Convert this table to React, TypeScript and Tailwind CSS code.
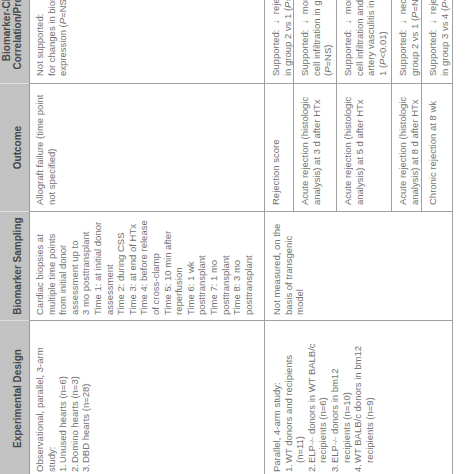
const L = ({ children }: { children: React.ReactNode }) => (
  <div className="whitespace-nowrap">{children}</div>
);

const Item = ({ n, lines }: { n: string; lines: React.ReactNode[] }) => (
  <div className="flex">
    <span className="w-[9px] shrink-0">{n}</span>
    <div>
      {lines.map((l, i) => (
        <L key={i}>{l}</L>
      ))}
    </div>
  </div>
);

const Sup = () => <sup className="text-[6px] relative -top-[1px]">–/–</sup>;

const subRows = [
  {
    h: "h-[29px]",
    outcome: ["Rejection score"],
    corr: [
      <>Supported:&nbsp; ↓&nbsp; rejection score</>,
      <>in group 2 vs 1 (<i>P</i>=NS)</>,
    ],
  },
  {
    h: "h-[43px]",
    outcome: ["Acute rejection (histologic", "analysis) at 3 d after HTx"],
    corr: [
      <>Supported:&nbsp; ↓&nbsp; mononuclear</>,
      <>cell infiltration in group 2 vs 1</>,
      <>(<i>P</i>=NS)</>,
    ],
  },
  {
    h: "h-[55px]",
    outcome: ["Acute rejection (histologic", "analysis) at 5 d after HTx"],
    corr: [
      <>Supported:&nbsp; ↓&nbsp; mononuclear</>,
      <>cell infiltration and coronary</>,
      <>artery vasculitis in group 2 vs</>,
      <>1 (<i>P</i>&lt;0.01)</>,
    ],
  },
  {
    h: "h-[30px]",
    outcome: ["Acute rejection (histologic", "analysis) at 8 d after HTx"],
    corr: [
      <>Supported:&nbsp; ↓&nbsp; necrosis in</>,
      <>group 2 vs 1 (<i>P</i>=NS)</>,
    ],
  },
  {
    h: "flex-1",
    outcome: ["Chronic rejection at 8 wk"],
    corr: [
      <>Supported:&nbsp; ↓&nbsp; rejection</>,
      <>in group 3 vs 4 (<i>P</i>&lt;0.05)</>,
    ],
  },
];

const sampling = [
  "Cardiac biopsies at",
  "multiple time points",
  "from initial donor",
  "assessment up to",
  "3 mo posttransplant",
  "Time 1: at initial donor",
  "assessment",
  "Time 2: during CSS",
  "Time 3: at end of HTx",
  "Time 4: before release",
  "of cross-clamp",
  "Time 5: 10 min after",
  "reperfusion",
  "Time 6: 1 wk",
  "posttransplant",
  "Time 7: 1 mo",
  "posttransplant",
  "Time 8: 3 mo",
  "posttransplant",
];

export default function App() {
  return (
    <div className="w-[474px] h-[474px] overflow-hidden bg-white font-['Liberation_Sans',Arial,sans-serif]">
      <div className="w-[474px] h-[474px] -rotate-90 overflow-hidden">
        <div className="ml-[-2px] w-[560px] text-[9.5px] leading-[11.6px] text-[#727272]">
          {/* header */}
          <div className="flex h-[30px] bg-[#c2c2c2] border-b border-[#999] text-[10px] leading-[11px] font-bold text-[#474747]">
            <div className="w-[156px] shrink-0 flex items-end justify-center pb-[6px] border-r border-[#dcdcdc]">
              Experimental Design
            </div>
            <div className="w-[109px] shrink-0 flex items-end justify-center pb-[6px] border-r border-[#dcdcdc]">
              Biomarker Sampling
            </div>
            <div className="w-[128px] shrink-0 flex items-end justify-center pb-[6px] border-r border-[#dcdcdc]">
              Outcome
            </div>
            <div className="w-[132px] shrink-0 flex flex-col items-center justify-end pb-[6px]">
              <L>Biomarker-Clinical</L>
              <L>Correlation/Prediction</L>
            </div>
          </div>

          {/* row 1 */}
          <div className="flex h-[235px] border-b border-[#a0a0a0]">
            <div className="w-[156px] shrink-0 pl-[4px] pt-[4px] border-r border-[#a0a0a0]">
              <L>Observational, parallel, 3-arm</L>
              <L>study:</L>
              <Item n="1." lines={["Unused hearts (n=6)"]} />
              <Item n="2." lines={["Domino hearts (n=3)"]} />
              <Item n="3." lines={["DBD hearts (n=28)"]} />
            </div>
            <div className="w-[109px] shrink-0 pl-[5px] pt-[4px] border-r border-[#a0a0a0]">
              {sampling.map((s, i) => (
                <L key={i}>{s}</L>
              ))}
            </div>
            <div className="w-[128px] shrink-0 pl-[6px] pt-[4px] border-r border-[#a0a0a0]">
              <L>Allograft failure (time point</L>
              <L>not specified)</L>
            </div>
            <div className="flex-1 pl-[7px] pt-[4px]">
              <L>Not supported:</L>
              <L>for changes in biomarker</L>
              <L>
                expression (<i>P</i>=NS)
              </L>
            </div>
          </div>

          {/* row 2 */}
          <div className="flex h-[188px] border-b border-[#a0a0a0]">
            <div className="w-[156px] shrink-0 pl-[4px] pt-[6px] border-r border-[#a0a0a0]">
              <L>Parallel, 4-arm study:</L>
              <Item n="1." lines={["WT donors and recipients", "(n=11)"]} />
              <Item
                n="2."
                lines={[
                  <>
                    ELP<Sup /> donors in WT BALB/c
                  </>,
                  "recipients (n=6)",
                ]}
              />
              <Item
                n="3."
                lines={[
                  <>
                    ELP<Sup /> donors in bm12
                  </>,
                  "recipients (n=10)",
                ]}
              />
              <Item n="4." lines={["WT BALB/c donors in bm12", "recipients (n=9)"]} />
            </div>
            <div className="w-[109px] shrink-0 pl-[5px] pt-[6px] border-r border-[#a0a0a0]">
              <L>Not measured, on the</L>
              <L>basis of transgenic</L>
              <L>model</L>
            </div>
            <div className="flex-1 flex flex-col">
              {subRows.map((r, i) => (
                <div
                  key={i}
                  className={`flex ${r.h} ${i < subRows.length - 1 ? "border-b border-[#a0a0a0]" : ""}`}
                >
                  <div className="w-[128px] shrink-0 pl-[6px] pt-[5px] border-r border-[#a0a0a0]">
                    {r.outcome.map((o, j) => (
                      <L key={j}>{o}</L>
                    ))}
                  </div>
                  <div className="flex-1 pl-[7px] pt-[5px]">
                    {r.corr.map((c, j) => (
                      <L key={j}>{c}</L>
                    ))}
                  </div>
                </div>
              ))}
            </div>
          </div>
        </div>
      </div>
    </div>
  );
}
